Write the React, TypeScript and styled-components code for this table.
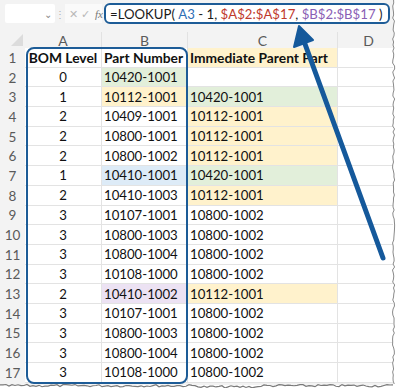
import React from "react";
import styled, { createGlobalStyle } from "styled-components";

const Global = createGlobalStyle`
  html, body { margin: 0; padding: 0; background: #ffffff; }
  body { width: 400px; height: 392px; overflow: hidden; font-family: Lato, "Liberation Sans", sans-serif; }
`;

const Frame = styled.div`
  position: relative;
  width: 400px;
  height: 392px;
  background: #ffffff;
  overflow: hidden;
`;

const Sheet = styled.div`
  width: 393px;
  height: 385px;
  background: #f3f3f3;
  display: flex;
  flex-direction: column;
  overflow: hidden;
`;

const Toolbar = styled.div`
  height: 32px;
  display: flex;
  align-items: flex-start;
  padding: 4px 0 0 5px;
  box-sizing: border-box;
`;

const NameBox = styled.div`
  width: 50px;
  height: 19px;
  background: #ffffff;
  border-radius: 2px;
  display: flex;
  align-items: center;
  justify-content: flex-end;
  padding-right: 3px;
  box-sizing: border-box;
  color: #888;
  font-size: 10px;
`;

const Dots = styled.div`
  width: 10px;
  height: 19px;
  display: flex;
  align-items: center;
  justify-content: center;
  color: #b0b0b0;
  font-size: 10px;
`;

const FnButtons = styled.div`
  width: 37px;
  height: 19px;
  background: #fafafa;
  display: flex;
  align-items: center;
  gap: 3px;
  padding-left: 4px;
  box-sizing: border-box;
  color: #b8b8b8;
  font-size: 11px;
  margin-right: 2px;
`;

const Fx = styled.span`
  font-family: "Liberation Serif", serif;
  font-style: italic;
  font-size: 11px;
  color: #777;
  margin-left: 2px;
`;

const FormulaBox = styled.div`
  width: 286px;
  height: 21px;
  margin-top: -1px;
  border: 2px solid #1d5c97;
  border-radius: 6px;
  background: #ffffff;
  box-sizing: border-box;
  display: flex;
  align-items: center;
  padding-left: 4px;
  font-size: 13.2px;
  color: #1a1a1a;
  white-space: pre;
  overflow: hidden;
`;

const Ref = styled.span<{ $c: string }>`
  color: ${(p) => p.$c};
`;

const Grid = styled.div`
  display: grid;
  grid-template-columns: 25px 77px 86px 150px 62px;
  grid-template-rows: 16px repeat(17, 19.7px);
  position: relative;
`;

const Corner = styled.div`
  background: #f3f3f3;
  position: relative;
  overflow: hidden;
  &::after {
    content: "";
    position: absolute;
    right: 2px;
    bottom: 2px;
    border-left: 12px solid transparent;
    border-bottom: 12px solid #dcdcdc;
  }
`;

const ColHead = styled.div`
  background: #f3f3f3;
  border-right: 1px solid #e2e2e2;
  display: flex;
  align-items: center;
  justify-content: center;
  font-size: 14px;
  color: #5a5a5a;
  box-sizing: border-box;
`;

const RowHead = styled.div`
  background: #f3f3f3;
  display: flex;
  align-items: center;
  justify-content: center;
  font-size: 13.5px;
  color: #5a5a5a;
  box-sizing: border-box;
`;

const Cell = styled.div<{ $bg?: string; $center?: boolean; $bold?: boolean }>`
  background: ${(p) => p.$bg || "#ffffff"};
  border-right: 1px solid #e3e3e3;
  border-bottom: 1px solid #e3e3e3;
  box-sizing: border-box;
  display: flex;
  align-items: center;
  justify-content: ${(p) => (p.$center ? "center" : "flex-start")};
  padding-left: ${(p) => (p.$center ? "0" : "2px")};
  font-size: ${(p) => (p.$bold ? "13.8px" : "13.2px")};
  font-weight: ${(p) => (p.$bold ? 700 : 400)};
  color: #111;
  white-space: nowrap;
  overflow: visible;
`;

const Highlight = styled.div`
  position: absolute;
  grid-column: 2 / 4;
  grid-row: 2 / 19;
  top: -1px;
  bottom: -1px;
  left: 1px;
  right: 0;
  border: 2px solid #1d5c97;
  border-radius: 8px;
  pointer-events: none;
  z-index: 2;
`;

const Overlay = styled.svg`
  position: absolute;
  left: 0;
  top: 0;
  pointer-events: none;
`;

const G = "#e2efda";
const Y = "#fff2cc";
const B = "#ddebf7";
const P = "#ece2f3";

type Row = [string, string, string, string?, string?];
const rows: Row[] = [
  ["0", "10420-1001", "", G],
  ["1", "10112-1001", "10420-1001", Y, G],
  ["2", "10409-1001", "10112-1001", undefined, Y],
  ["2", "10800-1001", "10112-1001", undefined, Y],
  ["2", "10800-1002", "10112-1001", undefined, Y],
  ["1", "10410-1001", "10420-1001", B, G],
  ["2", "10410-1003", "10112-1001", undefined, Y],
  ["3", "10107-1001", "10800-1002"],
  ["3", "10800-1003", "10800-1002"],
  ["3", "10800-1004", "10800-1002"],
  ["3", "10108-1000", "10800-1002"],
  ["2", "10410-1002", "10112-1001", P, Y],
  ["3", "10107-1001", "10800-1002"],
  ["3", "10800-1003", "10800-1002"],
  ["3", "10800-1004", "10800-1002"],
  ["3", "10108-1000", "10800-1002"],
];

function tornPath(): { right: string; bottom: string } {
  const r: string[] = [];
  let seed = 7;
  const rnd = () => {
    seed = (seed * 9301 + 49297) % 233280;
    return seed / 233280;
  };
  for (let y = 0; y <= 386; y += 3) {
    r.push(`${392.5 + rnd() * 2.2},${y}`);
  }
  const b: string[] = [];
  for (let x = 0; x <= 395; x += 3) {
    b.push(`${x},${384.5 + rnd() * 2.4 + (x > 200 && x < 260 ? 1.2 : 0)}`);
  }
  return { right: r.join(" "), bottom: b.join(" ") };
}

const torn = tornPath();

export default function App() {
  return (
    <Frame>
      <Global />
      <Sheet>
        <Toolbar>
          <NameBox>⌄</NameBox>
          <Dots>⋮</Dots>
          <FnButtons>
            <span>✕</span>
            <span>✓</span>
            <Fx>fx</Fx>
          </FnButtons>
          <FormulaBox>
            {"=LOOKUP( "}
            <Ref $c="#2f6eb5">A3</Ref>
            {" - 1, "}
            <Ref $c="#c0392b">$A$2:$A$17</Ref>
            {", "}
            <Ref $c="#8a5fb5">$B$2:$B$17</Ref>
            {" )"}
          </FormulaBox>
        </Toolbar>
        <Grid>
          <Corner />
          <ColHead>A</ColHead>
          <ColHead>B</ColHead>
          <ColHead>C</ColHead>
          <ColHead>D</ColHead>

          <RowHead>1</RowHead>
          <Cell $center $bold>BOM Level</Cell>
          <Cell $bold>Part Number</Cell>
          <Cell $bold $bg={Y}>Immediate Parent Part</Cell>
          <Cell />

          {rows.map((r, i) => (
            <React.Fragment key={i}>
              <RowHead>{i + 2}</RowHead>
              <Cell $center>{r[0]}</Cell>
              <Cell $bg={r[3]}>{r[1]}</Cell>
              <Cell $bg={r[4]}>{r[2]}</Cell>
              <Cell />
            </React.Fragment>
          ))}
          <Highlight />
        </Grid>
      </Sheet>
      <Overlay width={400} height={392} viewBox="0 0 400 392">
        <line x1={383} y1={258} x2={305} y2={44} stroke="#15599b" strokeWidth={5} strokeLinecap="round" />
        <polygon points="299,26 294,47 313,40" fill="#15599b" stroke="#15599b" strokeWidth={2} strokeLinejoin="round" />
        <polygon points={`${torn.right} 400,386 400,0`} fill="#ffffff" />
        <polygon points={`${torn.bottom} 400,392 0,392`} fill="#ffffff" />
        <polyline points={torn.right} fill="none" stroke="#8a8a8a" strokeWidth={1} />
        <polyline points={torn.bottom} fill="none" stroke="#7a7a7a" strokeWidth={1.2} />
        <rect x={0} y={388} width={400} height={4} fill="#ffffff" />
      </Overlay>
    </Frame>
  );
}
